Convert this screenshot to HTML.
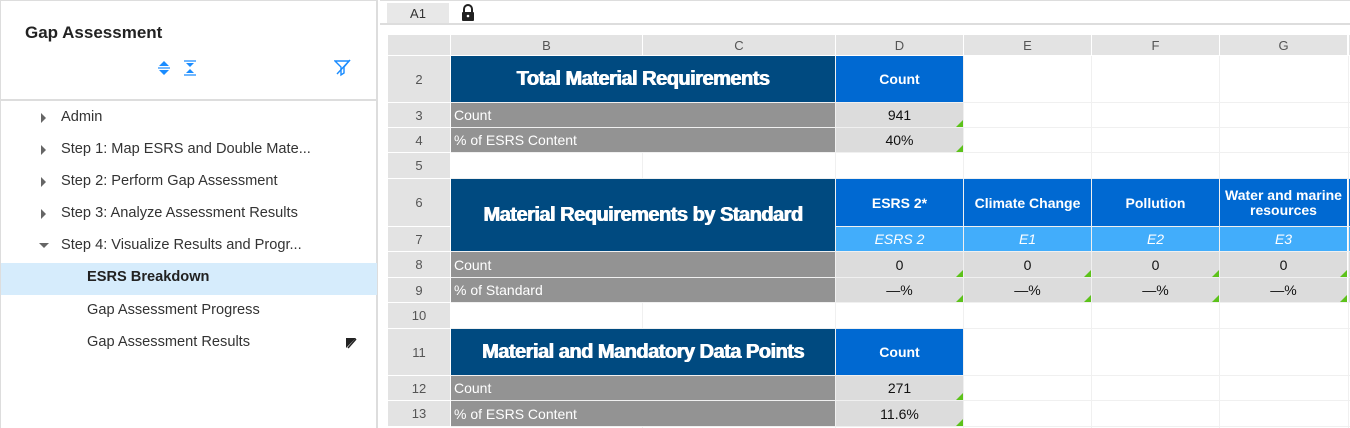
<!DOCTYPE html><html><head><style>
*{margin:0;padding:0;box-sizing:border-box}
body{width:1350px;height:428px;overflow:hidden;background:#fff;font-family:"Liberation Sans",sans-serif;position:relative}
.sb{position:absolute;left:0;top:0;width:378px;height:428px;border-right:2px solid #ddd;border-top:1px solid #ddd;border-left:1px solid #ddd}
.t{position:absolute;font-size:14.6px;color:#333}
.c{position:absolute;display:flex;align-items:center;justify-content:center;font-size:14px;color:#111}
.h{background:#e3e3e3;color:#555;font-size:13px}
.nv{background:#004a80;color:#fff;font-weight:bold;font-size:20px;letter-spacing:-0.5px;text-shadow:0.6px 0 0 #fff,-0.3px 0 0 #fff}
.bl{background:#0069d2;color:#fff;font-weight:bold;font-size:14px}
.lb{background:#42adfb;color:#fff;font-style:italic;font-size:14px}
.g{background:#939393;color:#fff;justify-content:flex-start;padding-left:3px;font-size:14px}
.v{background:#dcdcdc}
.v::after{content:"";position:absolute;right:0;bottom:0;border-left:7px solid transparent;border-bottom:7px solid #5cc21a}
.vl{position:absolute;top:56px;width:1px;height:372px;background:#f0f0f0}
.hl{position:absolute;left:451px;width:899px;height:1px;background:#f0f0f0}
</style></head><body>
<div class="sb">
<div class="t" style="left:24px;top:22px;font-size:17px;font-weight:bold;color:#222">Gap Assessment</div>
<svg style="position:absolute;left:155px;top:59px" width="16" height="16"><path d="M3 6L8 1L13 6Z M3 10L8 15L13 10Z" fill="#1a8cff"/><path d="M2 8H14" stroke="#1a8cff" stroke-width="1.2"/></svg>
<svg style="position:absolute;left:181px;top:59px" width="16" height="16"><path d="M2 1H14M2 15H14" stroke="#1a8cff" stroke-width="1.2"/><path d="M4 3H12L8 7Z M4 13H12L8 9Z" fill="#1a8cff"/></svg>
<svg style="position:absolute;left:333px;top:58px" width="18" height="18"><path d="M1 2H15L10 8V14L7 16V8Z" fill="none" stroke="#1a8cff" stroke-width="1.4"/><path d="M16 1L3 15" stroke="#1a8cff" stroke-width="1.4"/></svg>
<div style="position:absolute;left:0;top:98px;width:376px;height:2px;background:#ddd"></div>
<svg style="position:absolute;left:39px;top:111px" width="8" height="12"><path d="M1 1L6 6L1 11Z" fill="#666"/></svg><div class="t" style="left:60px;top:108px">Admin</div>
<svg style="position:absolute;left:39px;top:143px" width="8" height="12"><path d="M1 1L6 6L1 11Z" fill="#666"/></svg><div class="t" style="left:60px;top:140px">Step 1: Map ESRS and Double Mate...</div>
<svg style="position:absolute;left:39px;top:175px" width="8" height="12"><path d="M1 1L6 6L1 11Z" fill="#666"/></svg><div class="t" style="left:60px;top:172px">Step 2: Perform Gap Assessment</div>
<svg style="position:absolute;left:39px;top:207px" width="8" height="12"><path d="M1 1L6 6L1 11Z" fill="#666"/></svg><div class="t" style="left:60px;top:204px">Step 3: Analyze Assessment Results</div>
<svg style="position:absolute;left:37px;top:241px" width="12" height="8"><path d="M1 1H11L6 6Z" fill="#666"/></svg><div class="t" style="left:60px;top:236px">Step 4: Visualize Results and Progr...</div>
<div style="position:absolute;left:0;top:262px;width:376px;height:32px;background:#d6ecfc"></div>
<div class="t" style="left:86px;top:268px;font-weight:bold;color:#222">ESRS Breakdown</div>
<div class="t" style="left:86px;top:301px">Gap Assessment Progress</div>
<div class="t" style="left:86px;top:333px">Gap Assessment Results</div>
<svg style="position:absolute;left:344px;top:336px" width="12" height="12"><path d="M1 1H11L1 11Z" fill="#222"/><path d="M11 2L3 11" stroke="#222" stroke-width="1.5"/></svg>
</div>
<div style="position:absolute;left:380px;top:0;width:970px;height:25px;border-bottom:2px solid #ddd;border-top:1px solid #ddd"></div>
<div class="c" style="left:387px;top:3px;width:62px;height:20px;background:#e8e8e8;font-size:13px;color:#333">A1</div>
<svg style="position:absolute;left:460px;top:4px" width="16" height="18"><path d="M4 8V5A4 4 0 0 1 12 5V8" fill="none" stroke="#222" stroke-width="2"/><rect x="2" y="8" width="12" height="9" rx="1" fill="#222"/><circle cx="8" cy="12" r="1.3" fill="#fff"/></svg>
<div style="position:absolute;left:388px;top:35px;width:962px;height:393px;background:#fff"></div>
<div class="vl" style="left:642px"></div><div class="vl" style="left:835px"></div><div class="vl" style="left:963px"></div><div class="vl" style="left:1091px"></div><div class="vl" style="left:1219px"></div><div class="vl" style="left:1348px"></div>
<div class="hl" style="top:102px"></div><div class="hl" style="top:127px"></div><div class="hl" style="top:152px"></div><div class="hl" style="top:178px"></div><div class="hl" style="top:226px"></div><div class="hl" style="top:251px"></div><div class="hl" style="top:277px"></div><div class="hl" style="top:302px"></div><div class="hl" style="top:328px"></div><div class="hl" style="top:375px"></div><div class="hl" style="top:400px"></div><div class="hl" style="top:426px"></div>
<div class="c h" style="left:388px;top:35px;width:62px;height:20px"></div>
<div class="c h" style="left:451px;top:35px;width:191px;height:20px">B</div>
<div class="c h" style="left:643px;top:35px;width:192px;height:20px">C</div>
<div class="c h" style="left:836px;top:35px;width:127px;height:20px">D</div>
<div class="c h" style="left:964px;top:35px;width:127px;height:20px">E</div>
<div class="c h" style="left:1092px;top:35px;width:127px;height:20px">F</div>
<div class="c h" style="left:1220px;top:35px;width:127px;height:20px">G</div>
<div class="c h" style="left:1349px;top:35px;width:10px;height:20px"></div>
<div class="c h" style="left:388px;top:56px;width:62px;height:46px">2</div>
<div class="c h" style="left:388px;top:103px;width:62px;height:24px">3</div>
<div class="c h" style="left:388px;top:128px;width:62px;height:24px">4</div>
<div class="c h" style="left:388px;top:153px;width:62px;height:25px">5</div>
<div class="c h" style="left:388px;top:179px;width:62px;height:47px">6</div>
<div class="c h" style="left:388px;top:227px;width:62px;height:24px">7</div>
<div class="c h" style="left:388px;top:252px;width:62px;height:25px">8</div>
<div class="c h" style="left:388px;top:278px;width:62px;height:24px">9</div>
<div class="c h" style="left:388px;top:303px;width:62px;height:25px">10</div>
<div class="c h" style="left:388px;top:329px;width:62px;height:46px">11</div>
<div class="c h" style="left:388px;top:376px;width:62px;height:24px">12</div>
<div class="c h" style="left:388px;top:401px;width:62px;height:25px">13</div>
<div class="c nv" style="left:451px;top:56px;width:384px;height:46px">Total Material Requirements</div>
<div class="c bl" style="left:836px;top:56px;width:127px;height:46px">Count</div>
<div class="c g" style="left:451px;top:103px;width:384px;height:24px">Count</div>
<div class="c v" style="left:836px;top:103px;width:127px;height:24px">941</div>
<div class="c g" style="left:451px;top:128px;width:384px;height:24px">% of ESRS Content</div>
<div class="c v" style="left:836px;top:128px;width:127px;height:24px">40%</div>
<div class="c nv" style="left:451px;top:179px;width:384px;height:72px">Material Requirements by Standard</div>
<div class="c bl" style="left:836px;top:179px;width:127px;height:47px">ESRS 2*</div>
<div class="c bl" style="left:964px;top:179px;width:127px;height:47px">Climate Change</div>
<div class="c bl" style="left:1092px;top:179px;width:127px;height:47px">Pollution</div>
<div class="c bl" style="left:1220px;top:179px;width:127px;height:47px;text-align:center;line-height:15px">Water and marine<br>resources</div>
<div class="c bl" style="left:1349px;top:179px;width:10px;height:47px"></div>
<div class="c lb" style="left:836px;top:227px;width:127px;height:24px">ESRS 2</div>
<div class="c lb" style="left:964px;top:227px;width:127px;height:24px">E1</div>
<div class="c lb" style="left:1092px;top:227px;width:127px;height:24px">E2</div>
<div class="c lb" style="left:1220px;top:227px;width:127px;height:24px">E3</div>
<div class="c lb" style="left:1349px;top:227px;width:10px;height:24px"></div>
<div class="c g" style="left:451px;top:252px;width:384px;height:25px">Count</div>
<div class="c v" style="left:836px;top:252px;width:127px;height:25px">0</div>
<div class="c v" style="left:964px;top:252px;width:127px;height:25px">0</div>
<div class="c v" style="left:1092px;top:252px;width:127px;height:25px">0</div>
<div class="c v" style="left:1220px;top:252px;width:127px;height:25px">0</div>
<div class="c" style="left:1349px;top:252px;width:10px;height:25px;background:#dcdcdc"></div>
<div class="c g" style="left:451px;top:278px;width:384px;height:24px">% of Standard</div>
<div class="c v" style="left:836px;top:278px;width:127px;height:24px">—%</div>
<div class="c v" style="left:964px;top:278px;width:127px;height:24px">—%</div>
<div class="c v" style="left:1092px;top:278px;width:127px;height:24px">—%</div>
<div class="c v" style="left:1220px;top:278px;width:127px;height:24px">—%</div>
<div class="c" style="left:1349px;top:278px;width:10px;height:24px;background:#dcdcdc"></div>
<div class="c nv" style="left:451px;top:329px;width:384px;height:46px">Material and Mandatory Data Points</div>
<div class="c bl" style="left:836px;top:329px;width:127px;height:46px">Count</div>
<div class="c g" style="left:451px;top:376px;width:384px;height:24px">Count</div>
<div class="c v" style="left:836px;top:376px;width:127px;height:24px">271</div>
<div class="c g" style="left:451px;top:401px;width:384px;height:25px">% of ESRS Content</div>
<div class="c v" style="left:836px;top:401px;width:127px;height:25px">11.6%</div>
</body></html>
